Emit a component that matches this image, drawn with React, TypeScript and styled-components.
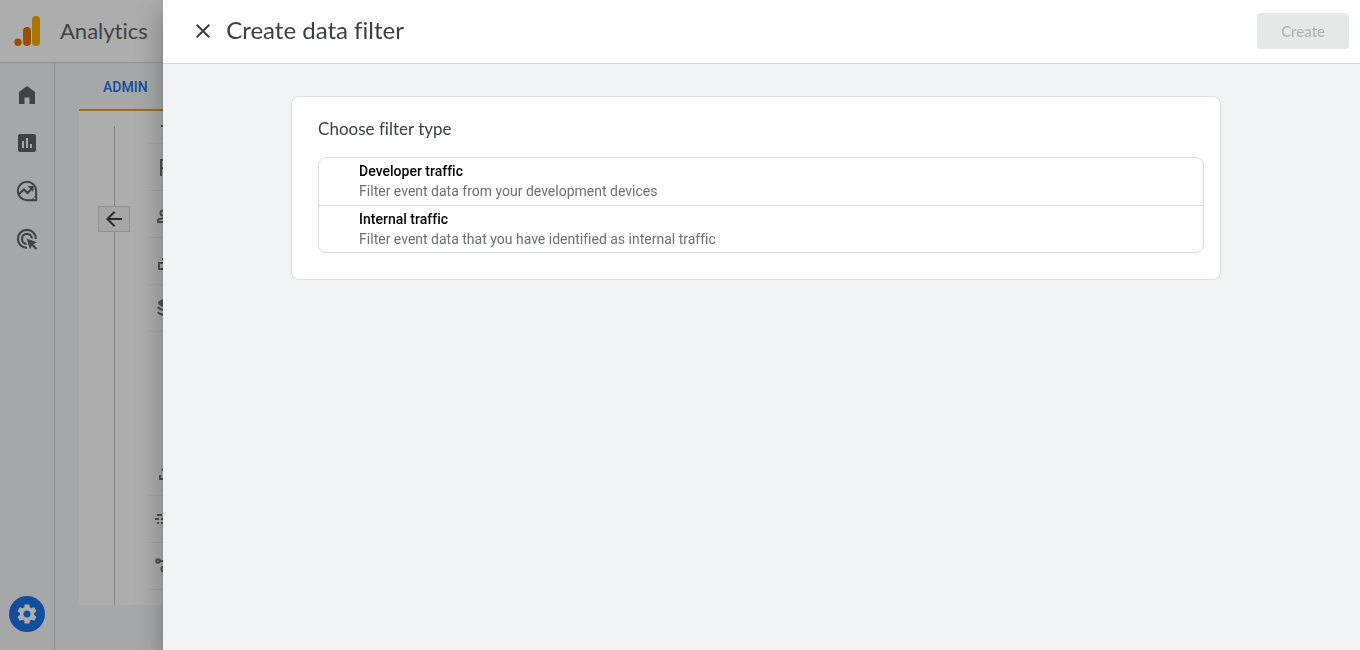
import React from 'react';
import styled, { createGlobalStyle } from 'styled-components';
import { MdSettings, MdInsertChart, MdArrowBack, MdClose } from 'react-icons/md';

const display = `Lato, "Liberation Sans", sans-serif`;

const GlobalStyle = createGlobalStyle`
  *, *::before, *::after { box-sizing: border-box; }
  body {
    margin: 0;
    overflow: hidden;
    font-family: Roboto, "Liberation Sans", sans-serif;
    font-size: 14px;
    line-height: 20px;
    font-variant-ligatures: none;
  }
  button { font: inherit; font-variant-ligatures: none; padding: 0; border: 0; background: none; cursor: pointer; }
  h1, h2, p, ul { margin: 0; padding: 0; font-weight: 400; }
  svg { display: block; flex: none; }
`;

const Shell = styled.div`
  display: flex;
  flex-direction: column;
  min-height: 100vh;
  background: #f5f7fa;
  color: #5f6368;
`;

const TopBar = styled.header`
  display: flex;
  align-items: center;
  gap: 20px;
  height: 63px;
  padding-left: 14px;
  background: #fff;
  border-bottom: 1px solid #d2d5da;
`;

const Product = styled.span`
  font-family: ${display};
  font-size: 22px;
  line-height: 28px;
`;

const Body = styled.div`
  display: flex;
  flex: 1;
`;

const Rail = styled.nav`
  display: flex;
  flex-direction: column;
  align-items: center;
  width: 55px;
  padding: 8px 0 18px;
  border-right: 1px solid #ced1d6;
`;

const RailLink = styled.a`
  display: grid;
  place-items: center;
  width: 48px;
  height: 48px;
  color: #5f6368;
`;

const AdminLink = styled.a`
  display: grid;
  place-items: center;
  width: 36px;
  height: 36px;
  margin-top: auto;
  border-radius: 50%;
  background: #1a73e8;
  color: #fff;
`;

const Content = styled.main`
  display: flex;
  flex-direction: column;
  flex: 1;
  padding: 0 24px 45px;
`;

const Tabs = styled.div`
  display: flex;
  height: 48px;
`;

const Tab = styled.a`
  padding: 14px 24px 0;
  border-bottom: 2px solid #ff9f00;
  color: #1a73e8;
  font-weight: 500;
  text-decoration: none;
`;

const Panel = styled.section`
  display: flex;
  flex: 1;
  background: #fff;
`;

const Track = styled.div`
  display: flex;
  flex-direction: column;
  align-items: center;
  width: 70px;
  padding-top: 15px;
`;

const TrackLine = styled.span<{ $grow?: boolean }>`
  width: 1px;
  height: 80px;
  flex: ${(p) => (p.$grow ? '1' : 'none')};
  background: #c2c2c2;
`;

const BackButton = styled.button`
  display: grid;
  place-items: center;
  width: 32px;
  height: 26px;
  border: 1px solid #d4d4d4;
  background: #f5f5f5;
  color: #3c4043;
`;

const Items = styled.ul`
  flex: 1;
  list-style: none;
`;

const Item = styled.li<{ $height?: number }>`
  display: flex;
  align-items: flex-end;
  height: ${(p) => p.$height ?? 47}px;
  padding: 0 4px 11px;
  border-bottom: 1px solid #f0f0f0;
  overflow: hidden;
  color: #757575;
`;

const Scrim = styled.div`
  position: fixed;
  inset: 0;
  background: rgba(0, 0, 0, 0.32);
`;

const Drawer = styled.section`
  position: fixed;
  inset: 0 0 0 auto;
  display: flex;
  flex-direction: column;
  width: 88%;
  background: #f1f3f4;
  box-shadow: 0 8px 10px -5px rgba(0, 0, 0, 0.2), 0 16px 24px 2px rgba(0, 0, 0, 0.14),
    0 6px 30px 5px rgba(0, 0, 0, 0.12);
`;

const DrawerHeader = styled.header`
  display: flex;
  align-items: center;
  height: 64px;
  padding: 0 11px 2px 28px;
  border-bottom: 1px solid #d3d5d7;
  background: #fff;
`;

const CloseButton = styled.button`
  display: grid;
  place-items: center;
  width: 24px;
  height: 24px;
  color: #3c4043;
`;

const DrawerTitle = styled.h1`
  flex: 1;
  padding: 0 0 2px 11px;
  font-family: ${display};
  font-size: 24px;
  line-height: 28px;
  color: #3c4043;
`;

const CreateButton = styled.button`
  height: 36px;
  padding: 0 24px;
  border-radius: 4px;
  background: #e6e8e7;
  color: #afb2b0;
  font-family: ${display};
  font-size: 15px;
  font-weight: 500;
`;

const DrawerBody = styled.div`
  flex: 1;
  overflow: auto;
  padding: 32px 11px 32px 0;
`;

const Card = styled.section`
  max-width: 930px;
  margin: 0 auto;
  padding: 20px 16px 26px 26px;
  border: 1px solid #dadce0;
  border-radius: 8px;
  background: #fff;
`;

const CardTitle = styled.h2`
  margin-bottom: 16px;
  font-family: ${display};
  font-size: 17px;
  line-height: 24px;
  color: #3c4043;
`;

const Options = styled.div`
  border: 1px solid #dadce0;
  border-radius: 8px;
  overflow: hidden;
`;

const Option = styled.button`
  display: block;
  width: 100%;
  padding: 3px 40px;
  text-align: left;

  & + & {
    border-top: 1px solid #dadce0;
  }
  &:first-child {
    padding-bottom: 4px;
  }
`;

const OptionName = styled.span`
  display: block;
  font-weight: 500;
  color: #000;
`;

const OptionHint = styled.span`
  display: block;
  color: #6b6f73;
`;

const Logo = () => (
  <svg width="26" height="30" viewBox="0 0 26 30" aria-hidden="true">
    <rect x="18" y="0" width="8" height="30" rx="4" fill="#f9ab00" />
    <rect x="9" y="11" width="8" height="19" rx="4" fill="#e37400" />
    <circle cx="4" cy="26.300" r="3.700" fill="#e37400" />
  </svg>
);

const HomeIcon = () => (
  <svg width="24" height="24" viewBox="0 0 24 24" aria-hidden="true">
    <path d="M12 3l8 6v12h-5.500v-6.500h-5V21H4V9z" fill="currentColor" />
  </svg>
);

const ExploreIcon = () => (
  <svg width="24" height="24" viewBox="0 0 24 24" fill="none" stroke="currentColor" strokeWidth="2" aria-hidden="true">
    <path d="M21.200 12a9.200 9.200 0 1 0-9.200 9.200h9.200z" />
    <path d="M4 15l5-4.500 3.500 3.500 5-5" strokeWidth="2.200" />
    <path d="M12.500 7h6v6z" fill="currentColor" stroke="none" />
    <path d="M22 13v9h-9c4-1 7-4 9-9z" fill="currentColor" stroke="none" />
    <circle cx="19.500" cy="19.300" r="1" fill="#f5f7fa" stroke="none" />
  </svg>
);

const AdvertisingIcon = () => (
  <svg width="24" height="24" viewBox="0 0 24 24" fill="none" stroke="currentColor" strokeWidth="2.200" aria-hidden="true">
    <path d="M20.900 12A9 9 0 1 0 12 20.900" />
    <path d="M16.900 11.500A5 5 0 1 0 11.500 16.900" />
    <path d="M11.500 11.500l10.500 3.800-3.700 2 4 4-1.500 1.500-4-4-1.800 3.700z" fill="currentColor" stroke="none" />
  </svg>
);

const glyphs: { id: string; height?: number; art: React.ReactNode }[] = [
  { id: 'top', height: 33, art: <path d="M8 18h8" /> },
  { id: 'property', art: <path d="M8 21V5h9v16M8 13h6" /> },
  {
    id: 'people',
    art: (
      <>
        <circle cx="10" cy="11" r="2.500" />
        <path d="M5 20v-2c1-2 8-2 10 0v2z" />
      </>
    ),
  },
  { id: 'streams', art: <path d="M6 14h10v6H6zM9 10h4" /> },
  {
    id: 'data',
    art: (
      <>
        <ellipse cx="13" cy="7" rx="8" ry="4" fill="currentColor" stroke="none" />
        <path d="M5 11c2 4 14 4 16 0M5 16c2 4 14 4 16 0" />
      </>
    ),
  },
  { id: 'import', height: 164, art: <path d="M7 15v4h12v-4M9 9l4 4 4-4" /> },
  { id: 'identity', art: <path d="M4 8h5M11 8h5M2 12h4M8 12h6M4 16h2M8 16h6" /> },
  {
    id: 'attribution',
    art: (
      <>
        <circle cx="5" cy="7" r="1.800" />
        <circle cx="11" cy="15" r="2.500" />
        <path d="M7 7h10" />
      </>
    ),
  },
];

const options = [
  { name: 'Developer traffic', hint: 'Filter event data from your development devices' },
  { name: 'Internal traffic', hint: 'Filter event data that you have identified as internal traffic' },
];

export default function App() {
  return (
    <>
      <GlobalStyle />
      <Shell>
        <TopBar>
          <Logo />
          <Product>Analytics</Product>
        </TopBar>
        <Body>
          <Rail aria-label="Main">
            <RailLink href="#home" aria-label="Home"><HomeIcon /></RailLink>
            <RailLink href="#reports" aria-label="Reports"><MdInsertChart size={24} /></RailLink>
            <RailLink href="#explore" aria-label="Explore"><ExploreIcon /></RailLink>
            <RailLink href="#advertising" aria-label="Advertising"><AdvertisingIcon /></RailLink>
            <AdminLink href="#admin" aria-label="Admin"><MdSettings size={24} /></AdminLink>
          </Rail>
          <Content>
            <Tabs><Tab href="#admin">ADMIN</Tab></Tabs>
            <Panel>
              <Track>
                <TrackLine />
                <BackButton aria-label="Back"><MdArrowBack size={24} /></BackButton>
                <TrackLine $grow />
              </Track>
              <Items>
                {glyphs.map((g) => (
                  <Item key={g.id} $height={g.height}>
                    <svg width="24" height="24" viewBox="0 0 24 24" fill="none" stroke="currentColor" strokeWidth="2" aria-hidden="true">
                      {g.art}
                    </svg>
                  </Item>
                ))}
              </Items>
            </Panel>
          </Content>
        </Body>
      </Shell>
      <Scrim />
      <Drawer role="dialog" aria-labelledby="drawer-title">
        <DrawerHeader>
          <CloseButton aria-label="Close"><MdClose size={24} /></CloseButton>
          <DrawerTitle id="drawer-title">Create data filter</DrawerTitle>
          <CreateButton disabled>Create</CreateButton>
        </DrawerHeader>
        <DrawerBody>
          <Card>
            <CardTitle>Choose filter type</CardTitle>
            <Options>
              {options.map((o) => (
                <Option key={o.name}>
                  <OptionName>{o.name}</OptionName>
                  <OptionHint>{o.hint}</OptionHint>
                </Option>
              ))}
            </Options>
          </Card>
        </DrawerBody>
      </Drawer>
    </>
  );
}
